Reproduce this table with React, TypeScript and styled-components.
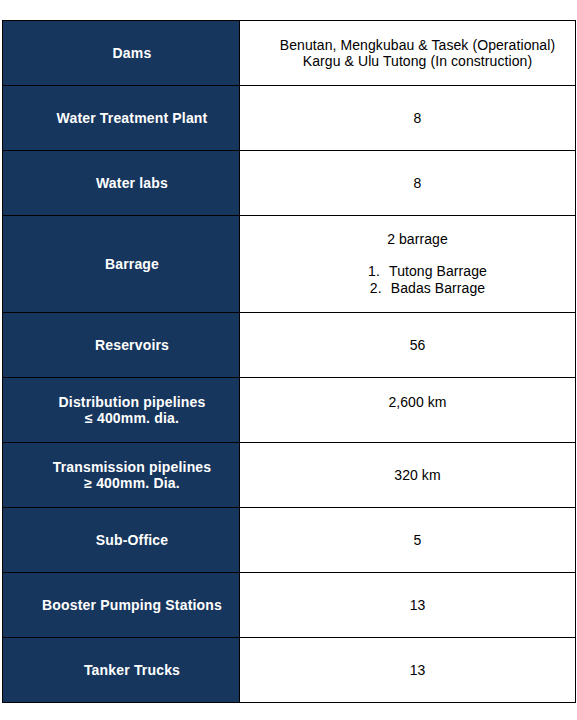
import React from "react";
import styled, { createGlobalStyle } from "styled-components";

const Global = createGlobalStyle`
  html, body { margin: 0; padding: 0; background: #ffffff; }
  body { font-family: "Liberation Sans", Arial, sans-serif; }
`;

const Page = styled.div`
  padding: 20px 0 0 2px;
`;

const Table = styled.div`
  display: grid;
  grid-template-columns: 237px 336px;
  width: 574px;
  border-top: 1px solid #000;
  border-left: 1px solid #000;
  box-sizing: border-box;
`;

const Cell = styled.div<{ $h: number }>`
  box-sizing: border-box;
  height: ${(p) => p.$h}px;
  border-right: 1px solid #000;
  border-bottom: 1px solid #000;
  display: flex;
  flex-direction: column;
  align-items: center;
  justify-content: center;
  text-align: center;
  font-size: 14px;
  line-height: 16px;
`;

const Label = styled(Cell)`
  background: #17365d;
  color: #ffffff;
  font-weight: bold;
  letter-spacing: 0.17px;
  padding-left: 22px;
`;

const Value = styled(Cell)`
  background: #ffffff;
  color: #000000;
  letter-spacing: 0.08px;
  padding-left: 20px;
`;

const Line = styled.div<{ $empty?: boolean }>`
  min-height: 16px;
  white-space: nowrap;
`;

const List = styled.div`
  padding-left: 20px;
  display: flex;
  flex-direction: column;
  align-items: center;
`;

const Item = styled.div`
  white-space: nowrap;
  line-height: 17px;
`;

const Num = styled.span`
  display: inline-block;
  width: 21px;
  text-align: left;
`;

type Row = { label: string[]; value: React.ReactNode; h?: number };

const rows: Row[] = [
  {
    label: ["Dams"],
    value: (
      <>
        <Line>Benutan, Mengkubau &amp; Tasek (Operational)</Line>
        <Line>Kargu &amp; Ulu Tutong (In construction)</Line>
      </>
    ),
  },
  { label: ["Water Treatment Plant"], value: <Line>8</Line> },
  { label: ["Water labs"], value: <Line>8</Line> },
  {
    label: ["Barrage"],
    h: 97,
    value: (
      <>
        <Line>2 barrage</Line>
        <Line $empty />
        <List>
          <Item>
            <Num>1.</Num>Tutong Barrage
          </Item>
          <Item>
            <Num>2.</Num>Badas Barrage
          </Item>
        </List>
      </>
    ),
  },
  { label: ["Reservoirs"], value: <Line>56</Line> },
  {
    label: ["Distribution pipelines", "\u2264 400mm. dia."],
    value: (
      <>
        <Line>2,600 km</Line>
        <Line $empty />
      </>
    ),
  },
  {
    label: ["Transmission pipelines", "\u2265 400mm. Dia."],
    value: <Line>320 km</Line>,
  },
  { label: ["Sub-Office"], value: <Line>5</Line> },
  { label: ["Booster Pumping Stations"], value: <Line>13</Line> },
  { label: ["Tanker Trucks"], value: <Line>13</Line> },
];

export default function App() {
  return (
    <>
      <Global />
      <Page>
        <Table>
          {rows.map((r, i) => (
            <React.Fragment key={i}>
              <Label $h={r.h ?? 65}>
                {r.label.map((l, j) => (
                  <Line key={j}>{l}</Line>
                ))}
              </Label>
              <Value $h={r.h ?? 65}>{r.value}</Value>
            </React.Fragment>
          ))}
        </Table>
      </Page>
    </>
  );
}
